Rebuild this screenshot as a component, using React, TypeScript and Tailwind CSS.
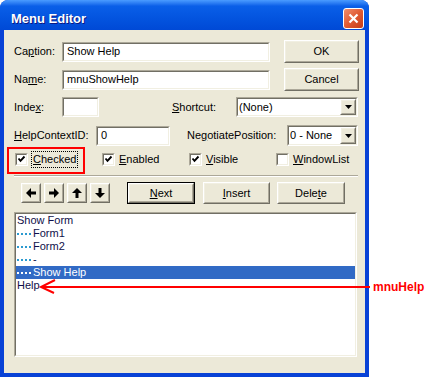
import * as React from 'react';

const font = { fontFamily: '"Liberation Sans", Arial, sans-serif' };

// classic 3D sunken frame (textbox, listbox, checkbox)
function Sunken({ className, children }: { className?: string; children?: React.ReactNode }) {
  return (
    <div className={`border border-t-[#aca899] border-l-[#aca899] border-b-white border-r-white ${className ?? ''}`}>
      <div className="h-full w-full border border-t-[#716f64] border-l-[#716f64] border-b-[#f1efe2] border-r-[#f1efe2] bg-white">
        {children}
      </div>
    </div>
  );
}

// classic raised button face
function Raised({ className, children }: { className?: string; children?: React.ReactNode }) {
  return (
    <div className={`border border-t-white border-l-white border-b-[#716f64] border-r-[#716f64] ${className ?? ''}`}>
      <div className="flex h-full w-full items-center justify-center border border-t-[#f1efe2] border-l-[#f1efe2] border-b-[#aca899] border-r-[#aca899] bg-[#ece9d8]">
        {children}
      </div>
    </div>
  );
}

function TextBox({ value, className }: { value?: string; className: string }) {
  return (
    <Sunken className={className}>
      <div className="flex h-full items-center pl-[3px] text-[11px] leading-none text-black">{value}</div>
    </Sunken>
  );
}

function Combo({ value, className }: { value: string; className: string }) {
  return (
    <Sunken className={className}>
      <div className="flex h-full items-center">
        <div className="flex-1 pl-[1px] text-[11px] leading-none text-black">{value}</div>
        <Raised className="h-full w-[16px]">
          <svg width="7" height="4" viewBox="0 0 7 4">
            <polygon points="0,0 7,0 3.5,4" fill="#000" />
          </svg>
        </Raised>
      </div>
    </Sunken>
  );
}

function CheckBox({ checked }: { checked: boolean }) {
  return (
    <Sunken className="h-[13px] w-[13px] shrink-0">
      {checked && (
        <svg width="9" height="9" viewBox="0 0 9 9" className="block">
          <path d="M1.5 3.5 L3.5 5.8 L7.5 1.5" stroke="#000" strokeWidth="1.9" fill="none" />
        </svg>
      )}
    </Sunken>
  );
}

function Arrow({ dir }: { dir: 'left' | 'right' | 'up' | 'down' }) {
  const rot = { left: 0, right: 180, up: 90, down: 270 }[dir];
  return (
    <svg width="10" height="10" viewBox="0 0 10 10" style={{ transform: `rotate(${rot}deg)` }}>
      <polygon points="0,5 5,0 5,10" fill="#000" />
      <rect x="4" y="3.5" width="6" height="3" fill="#000" />
    </svg>
  );
}

function Dots({ selected }: { selected?: boolean }) {
  return (
    <span className="mr-[2px] flex w-[14px] gap-[2px]">
      {[0, 1, 2, 3].map((d) => (
        <span key={d} className={`h-[2px] w-[2px] ${selected ? 'bg-white' : 'bg-[#2a9ad0]'}`} />
      ))}
    </span>
  );
}

const items = [
  { text: 'Show Form', level: 0 },
  { text: 'Form1', level: 1 },
  { text: 'Form2', level: 1 },
  { text: '-', level: 1 },
  { text: 'Show Help', level: 1, selected: true },
  { text: 'Help', level: 0 },
];

export default function App() {
  return (
    <div className="relative h-[379px] w-[430px] overflow-hidden bg-white" style={font}>
      {/* dialog window */}
      <div className="flex h-[377px] w-[369px] flex-col overflow-hidden rounded-t-[8px] bg-[#0842d6]">
        {/* title bar */}
        <div className="flex h-[30px] shrink-0 items-center justify-between bg-gradient-to-b from-[#4a9bff] via-[#0a5fe8] via-20% to-[#0049d6] pl-[11px] pr-[5px] pt-[7px]">
          <span className="text-[13px] font-bold leading-none text-white [text-shadow:1px_1px_0_#0a1883]">Menu Editor</span>
          <div className="flex h-[21px] w-[21px] items-center justify-center rounded-[3px] border border-white bg-gradient-to-br from-[#f08d6c] via-[#e05a33] to-[#c43c16]">
            <svg width="11" height="11" viewBox="0 0 11 11">
              <path d="M1.5 1.5 L9.5 9.5 M9.5 1.5 L1.5 9.5" stroke="#fff" strokeWidth="2.2" />
            </svg>
          </div>
        </div>

        {/* body */}
        <div className="mx-[4px] mb-[4px] flex flex-1 flex-col bg-[#ece9d8] pl-[10px] pt-[10px] text-[11px] leading-none text-black">
          <div className="flex h-[23px] items-center">
            <span className="w-[48px]">Ca<u>p</u>tion:</span>
            <TextBox value="Show Help" className="h-[20px] w-[208px]" />
            <Raised className="ml-[14px] h-[23px] w-[75px]">OK</Raised>
          </div>

          <div className="mt-[5px] flex h-[23px] items-center">
            <span className="w-[48px]">Na<u>m</u>e:</span>
            <TextBox value="mnuShowHelp" className="h-[20px] w-[208px]" />
            <Raised className="ml-[14px] h-[23px] w-[75px]">Cancel</Raised>
          </div>

          <div className="mt-[6px] flex h-[20px] items-center">
            <span className="w-[48px]">Inde<u>x</u>:</span>
            <TextBox className="h-[20px] w-[37px]" />
            <span className="ml-[73px] w-[64px]"><u>S</u>hortcut:</span>
            <Combo value="(None)" className="h-[20px] w-[122px]" />
          </div>

          <div className="mt-[8px] flex h-[21px] items-center">
            <span className="w-[82px]"><u>H</u>elpContextID:</span>
            <TextBox value="0" className="h-[20px] w-[74px]" />
            <span className="ml-[17px] w-[100px]">Ne<u>g</u>otiatePosition:</span>
            <Combo value="0 - None" className="h-[21px] w-[71px]" />
          </div>

          <div className="mt-[5px] flex h-[17px] items-center">
            <div className="relative ml-[1px] flex w-[87px] items-center">
              <CheckBox checked />
              <span className="ml-[3px] border border-dotted border-black px-[1px] py-[2px]"><u>C</u>hecked</span>
              {/* annotation highlight */}
              <div className="absolute left-[-8px] top-[-4px] h-[27px] w-[78px] border-2 border-[#ff0000]" />
            </div>
            <div className="flex w-[87px] items-center">
              <CheckBox checked />
              <span className="ml-[4px]"><u>E</u>nabled</span>
            </div>
            <div className="flex w-[87px] items-center">
              <CheckBox checked />
              <span className="ml-[4px]"><u>V</u>isible</span>
            </div>
            <div className="flex items-center">
              <CheckBox checked={false} />
              <span className="ml-[4px]"><u>W</u>indowList</span>
            </div>
          </div>

          <div className="mt-[7px] h-[2px] w-[344px] border-t border-b border-t-[#aca899] border-b-white" />

          <div className="mt-[5px] flex h-[22px] items-center">
            <div className="ml-[7px] flex gap-[3px]">
              <Raised className="h-[20px] w-[20px]"><Arrow dir="left" /></Raised>
              <Raised className="h-[20px] w-[20px]"><Arrow dir="right" /></Raised>
              <Raised className="h-[20px] w-[20px]"><Arrow dir="up" /></Raised>
              <Raised className="h-[20px] w-[20px]"><Arrow dir="down" /></Raised>
            </div>
            <div className="ml-[17px] h-[22px] w-[68px] border border-black">
              <Raised className="h-full w-full"><u>N</u>ext</Raised>
            </div>
            <Raised className="ml-[8px] h-[22px] w-[67px]"><u>I</u>nsert</Raised>
            <Raised className="ml-[7px] h-[22px] w-[68px]">Dele<u>t</u>e</Raised>
          </div>

          <Sunken className="mt-[8px] h-[145px] w-[343px]">
            <div className="flex flex-col">
              {items.map((it, i) => (
                <div
                  key={i}
                  className={`flex h-[13px] items-center pl-[1px] text-[11px] leading-none ${it.selected ? 'bg-[#316ac5] text-white' : 'text-[#10104a]'}`}
                >
                  {it.level > 0 && <Dots selected={it.selected} />}
                  <span>{it.text}</span>
                </div>
              ))}
            </div>
          </Sunken>
        </div>
      </div>

      {/* red annotation pointing at the Help item */}
      <svg className="absolute left-0 top-0" width="430" height="379" viewBox="0 0 430 379">
        <path d="M42 287 L370 287" stroke="#ff0000" strokeWidth="2" />
        <path d="M55 280 L41 287 L54 293" stroke="#ff0000" strokeWidth="2" fill="none" />
      </svg>
      <span className="absolute left-[373px] top-[280px] text-[12px] font-bold leading-[14px] text-[#ff0000]">mnuHelp</span>
    </div>
  );
}
